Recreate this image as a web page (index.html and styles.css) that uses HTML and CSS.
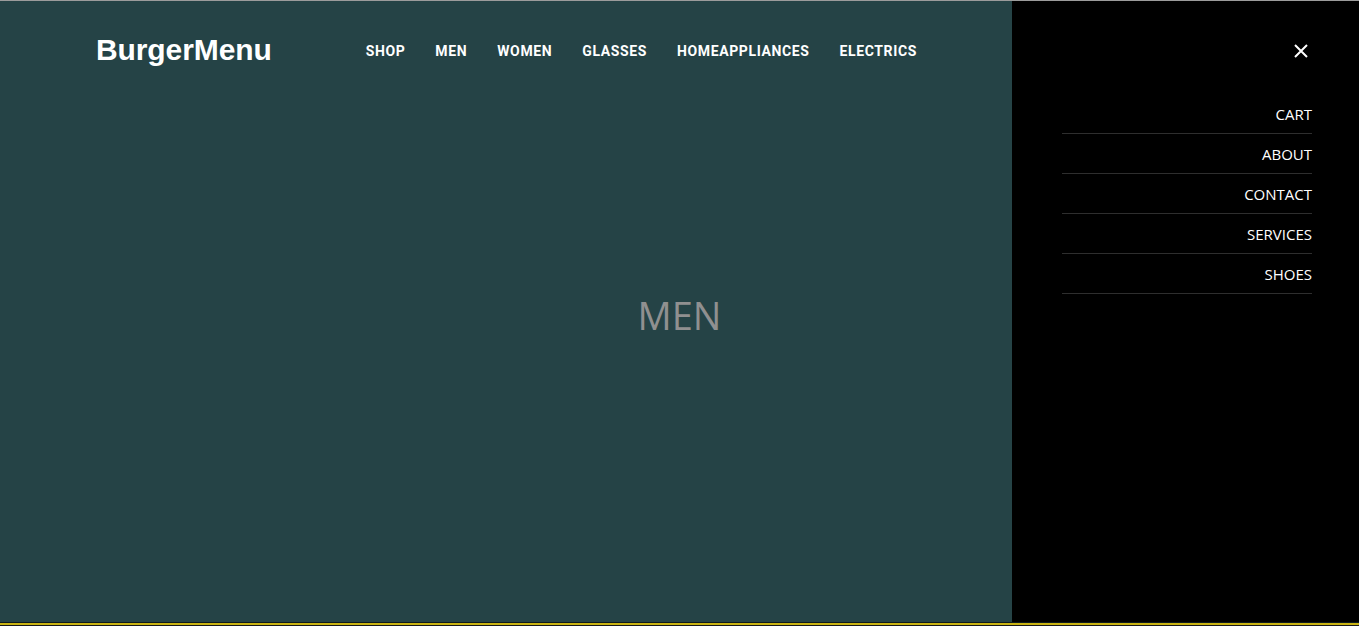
FILE: index.html
```html
<!DOCTYPE html>
<html lang="en">
<head>
<meta charset="utf-8">
<title>BurgerMenu</title>
<link rel="stylesheet" href="styles.css">
</head>
<body>
  <div class="app">
    <main class="page">
      <header class="header">
        <a class="logo" href="#">BurgerMenu</a>
        <nav class="nav">
          <a href="#">Shop</a>
          <a href="#">Men</a>
          <a href="#">Women</a>
          <a href="#">Glasses</a>
          <a href="#">Homeappliances</a>
          <a href="#">Electrics</a>
        </nav>
      </header>
      <section class="hero">
        <h1 class="hero-title">MEN</h1>
      </section>
    </main>
    <aside class="drawer">
      <button class="close" aria-label="Close">
        <svg width="14" height="14" viewBox="0 0 14 14"><path d="M1 1 L13 13 M13 1 L1 13" stroke="#fff" stroke-width="2" fill="none"/></svg>
      </button>
      <ul class="drawer-menu">
        <li><a href="#">CART</a></li>
        <li><a href="#">ABOUT</a></li>
        <li><a href="#">CONTACT</a></li>
        <li><a href="#">SERVICES</a></li>
        <li><a href="#">SHOES</a></li>
      </ul>
    </aside>
  </div>
  <div class="statusbar"></div>
</body>
</html>
```
FILE: styles.css
```css
html, body {
  margin: 0;
  padding: 0;
  height: 626px;
  overflow: hidden;
}
body {
  display: flex;
  flex-direction: column;
  border-top: 1px solid #9c9c9c;
  box-sizing: border-box;
  background: #254346;
}
.app {
  position: relative;
  flex: 1;
  display: flex;
}
.page {
  flex: 1;
  display: flex;
  flex-direction: column;
  background: #254346;
}
.header {
  display: flex;
  align-items: center;
  height: 98px;
  padding: 0 96px;
}
.logo {
  font-family: "Liberation Sans", Arial, sans-serif;
  font-weight: 700;
  font-size: 30px;
  color: #fff;
  text-decoration: none;
  letter-spacing: -0.1px;
}
.nav {
  display: flex;
  gap: 30px;
  margin-left: 94px;
  padding-top: 2px;
}
.nav a {
  font-family: Roboto, "Liberation Sans", sans-serif;
  font-weight: 700;
  font-size: 14px;
  text-transform: uppercase;
  color: #fff;
  text-decoration: none;
  letter-spacing: 0.62px;
}
.hero {
  flex: 1;
  display: flex;
  justify-content: center;
  align-items: center;
  padding-bottom: 92px;
}
.hero-title {
  margin: 0;
  font-family: "Open Sans", "Noto Sans", sans-serif;
  font-weight: 400;
  font-size: 38px;
  color: #909090;
}
.drawer {
  position: absolute;
  top: 0;
  right: 0;
  bottom: 0;
  width: 347px;
  box-sizing: border-box;
  padding: 43px 47px 0 50px;
  background: #000;
  display: flex;
  flex-direction: column;
}
.close {
  align-self: flex-end;
  margin-right: 4px;
  padding: 0;
  border: 0;
  background: none;
  width: 14px;
  height: 14px;
  display: block;
  cursor: pointer;
}
.close svg { display: block; }
.drawer-menu {
  list-style: none;
  margin: 36px 0 0;
  padding: 0;
}
.drawer-menu li {
  height: 39px;
  border-bottom: 1px solid #2e2e2e;
  display: flex;
  align-items: center;
  justify-content: flex-end;
}
.drawer-menu a {
  font-family: "Open Sans", "Noto Sans", sans-serif;
  font-size: 15px;
  color: #fff;
  text-decoration: none;
}
.statusbar {
  height: 4px;
  box-sizing: border-box;
  border-top: 1px solid #0f1c1d;
  border-bottom: 1px solid #1a1a1a;
  background: #c9b313;
}
```
